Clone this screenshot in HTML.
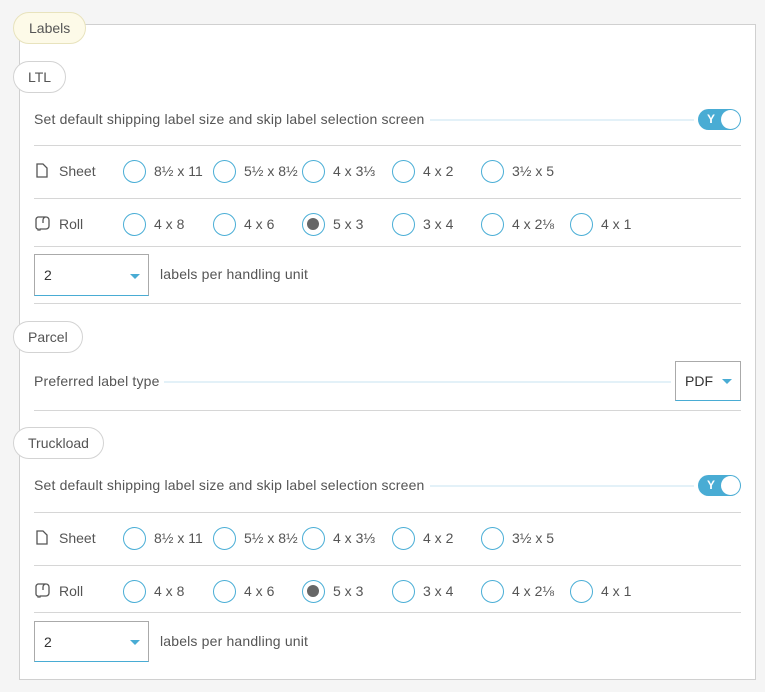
<!DOCTYPE html>
<html><head><meta charset="utf-8"><style>
*{box-sizing:border-box;margin:0;padding:0}
body{width:765px;height:692px;background:#f5f5f5;font-family:"Liberation Sans",Arial,sans-serif;color:#555;font-size:14px;position:relative;overflow:hidden}
.a{position:absolute}
.box{left:19px;top:24px;width:737px;height:656px;background:#fff;border:1px solid #d0d0d0}
.pill{position:absolute;height:32px;border:1px solid #d3d3d3;border-radius:16px;background:#fff;line-height:30px;padding:0 14px;font-size:14px;color:#555}
.sep{position:absolute;left:34px;width:707px;height:1px;background:#d6d6d6}
.txt{position:absolute;line-height:16px;white-space:nowrap}
.lt{letter-spacing:0.17px}
.rad{position:absolute;width:23px;height:23px;border:1.5px solid #4aaed6;border-radius:50%;background:#fff}
.rad.on::after{content:"";position:absolute;left:4px;top:4px;width:12px;height:12px;border-radius:50%;background:#666}
.dash{position:absolute;height:2px;background:#e3f1f8}
.tog{position:absolute;width:43px;height:21px;border-radius:11px;background:#49acd4}
.tog b{position:absolute;left:9px;top:2px;color:#fff;font-size:12px;line-height:17px}
.tog i{position:absolute;right:1px;top:1px;width:19px;height:19px;border-radius:50%;background:#fff}
.sel{position:absolute;border:1px solid #aaa;border-bottom:1px solid #49acd4;background:#fff}
.car{position:absolute;width:0;height:0;border-left:5px solid transparent;border-right:5px solid transparent;border-top:5px solid #49acd4}
</style></head><body>
<div class="a box"></div>
<div class="pill" style="left:13px;top:12px;background:#fdfae8;border-color:#e8e3bd;padding:0 15px">Labels</div>

<div class="pill" style="left:13px;top:61px;">LTL</div>
<div class="txt lt" style="left:34px;top:111px">Set default shipping label size and skip label selection screen</div>
<div class="dash" style="left:430px;top:119px;width:264px"></div>
<div class="tog" style="left:698px;top:109px"><b>Y</b><i></i></div>
<div class="sep" style="top:145px"></div>
<svg class="a" style="left:36px;top:163px" width="12" height="15" viewBox="0 0 12 15"><path d="M1 1h6l4 4v9H1z" fill="none" stroke="#555" stroke-width="1.3"/></svg>
<div class="txt" style="left:59px;top:163px">Sheet</div>
<div class="sep" style="top:198px"></div>
<svg class="a" style="left:35px;top:216px" width="16" height="15" viewBox="0 0 16 15"><path d="M3 1h8a3 3 0 0 1 3 3v6a3 3 0 0 1-3 3H5v1H3V13a2 2 0 0 1-2-2V4a3 3 0 0 1 2-3zM11 1a3 3 0 0 0-3 3v3" fill="none" stroke="#555" stroke-width="1.3"/></svg>
<div class="txt" style="left:59px;top:216px">Roll</div>
<div class="sep" style="top:246px"></div>
<div class="sel" style="left:34px;top:254px;width:115px;height:42px"><span class="txt" style="left:9px;top:12px;color:#333">2</span><div class="car" style="left:95px;top:19px"></div></div>
<div class="txt lt" style="left:160px;top:266px">labels per handling unit</div>
<div class="sep" style="top:303px"></div>

<div class="pill" style="left:13px;top:321px;">Parcel</div>
<div class="txt lt" style="left:34px;top:373px">Preferred label type</div>
<div class="dash" style="left:164px;top:381px;width:507px"></div>
<div class="sel" style="left:675px;top:361px;width:66px;height:40px"><span class="txt" style="left:9px;top:11px;color:#333">PDF</span><div class="car" style="left:46px;top:17px"></div></div>
<div class="sep" style="top:410px"></div>

<div class="pill" style="left:13px;top:427px;">Truckload</div>
<div class="txt lt" style="left:34px;top:477px">Set default shipping label size and skip label selection screen</div>
<div class="dash" style="left:430px;top:485px;width:264px"></div>
<div class="tog" style="left:698px;top:475px"><b>Y</b><i></i></div>
<div class="sep" style="top:512px"></div>
<svg class="a" style="left:36px;top:530px" width="12" height="15" viewBox="0 0 12 15"><path d="M1 1h6l4 4v9H1z" fill="none" stroke="#555" stroke-width="1.3"/></svg>
<div class="txt" style="left:59px;top:530px">Sheet</div>
<div class="sep" style="top:565px"></div>
<svg class="a" style="left:35px;top:583px" width="16" height="15" viewBox="0 0 16 15"><path d="M3 1h8a3 3 0 0 1 3 3v6a3 3 0 0 1-3 3H5v1H3V13a2 2 0 0 1-2-2V4a3 3 0 0 1 2-3zM11 1a3 3 0 0 0-3 3v3" fill="none" stroke="#555" stroke-width="1.3"/></svg>
<div class="txt" style="left:59px;top:583px">Roll</div>
<div class="sep" style="top:612px"></div>
<div class="sel" style="left:34px;top:621px;width:115px;height:41px"><span class="txt" style="left:9px;top:12px;color:#333">2</span><div class="car" style="left:95px;top:18px"></div></div>
<div class="txt lt" style="left:160px;top:633px">labels per handling unit</div>

<div id="r"></div>
<script>
var xs=[123,213,302,392,481,570];
var sheet=["8½ x 11","5½ x 8½","4 x 3⅓","4 x 2","3½ x 5"];
var roll=["4 x 8","4 x 6","5 x 3","3 x 4","4 x 2⅛","4 x 1"];
var h="";
[[171,sheet,-1],[224,roll,2],[538,sheet,-1],[591,roll,2]].forEach(function(r){
 r[1].forEach(function(t,i){
  h+='<div class="rad'+(i==r[2]?' on':'')+'" style="left:'+xs[i]+'px;top:'+(r[0]-11)+'px"></div>';
  h+='<div class="txt" style="left:'+(xs[i]+31)+'px;top:'+(r[0]-8)+'px">'+t+'</div>';
 });
});
document.getElementById("r").innerHTML=h;
</script>
</body></html>
